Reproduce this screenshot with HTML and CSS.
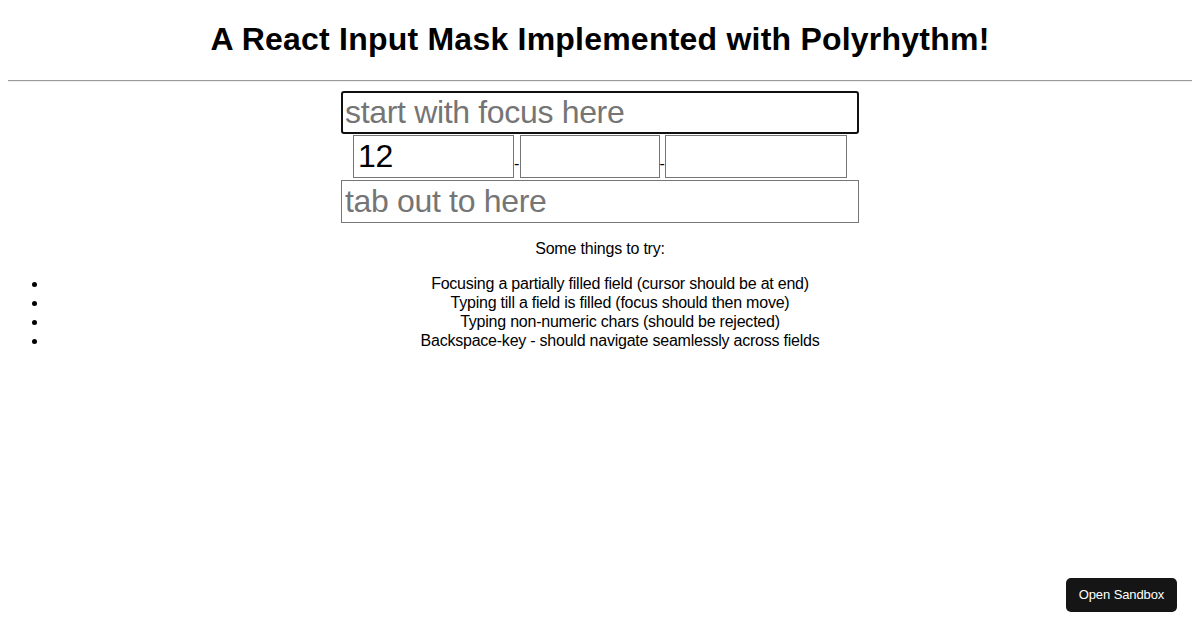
FILE: index.html
```html
<!DOCTYPE html>
<html>
<head>
<meta charset="utf-8">
<title>A React Input Mask Implemented with Polyrhythm!</title>
<link rel="stylesheet" href="styles.css">
</head>
<body>
<div class="app">
  <h1 class="title">A React Input Mask Implemented with Polyrhythm!</h1>
  <hr class="rule">
  <div class="fields">
    <div class="line first"><input class="field wide focused" type="text" placeholder="start with focus here"></div>
    <div class="line"><input class="field part p1" type="text" value="12"><span class="dash">-</span><input class="field part p2" type="text"><span class="dash">-</span><input class="field part p3" type="text"></div>
    <div class="line"><input class="field wide" type="text" placeholder="tab out to here"></div>
  </div>
  <p class="intro">Some things to try:</p>
  <ul class="tips">
    <li>Focusing a partially filled field (cursor should be at end)</li>
    <li>Typing till a field is filled (focus should then move)</li>
    <li>Typing non-numeric chars (should be rejected)</li>
    <li>Backspace-key - should navigate seamlessly across fields</li>
  </ul>
</div>
<a class="sandbox-btn" href="#">Open Sandbox</a>
</body>
</html>
```

FILE: styles.css
```css
html, body {
  background: #ffffff;
}
body {
  margin: 0 8px 8px;
  font-family: "Liberation Sans", Arial, sans-serif;
  font-size: 16px;
  color: #000;
}
.app {
  text-align: center;
  padding-top: 0.1px;
}
.title {
  font-size: 32px;
  font-weight: bold;
  margin: 21.3px 0 21.44px;
  line-height: 37px;
  letter-spacing: 0.22px;
}
.rule {
  margin: 8px 0;
  border: 0;
  border-top: 1px solid #9a9a9a;
  border-bottom: 1px solid #eeeeee;
  height: 0;
}
.fields {
  display: flex;
  flex-direction: column;
  align-items: center;
}
.line {
  height: 44.5px;
  display: flex;
  align-items: flex-start;
  justify-content: center;
}
.line.first {
  height: 44.5px;
  padding-top: 1px;
}
.field {
  box-sizing: border-box;
  height: 43px;
  margin: 0;
  font-family: "Liberation Sans", Arial, sans-serif;
  font-size: 32px;
  line-height: 37px;
  letter-spacing: -0.33px;
  color: #000;
  background: #fff;
  border: 1px solid #767676;
  padding: 2px 3px;
  outline: none;
  border-radius: 0;
}
.field::placeholder {
  color: #757575;
}
.wide {
  width: 518px;
}
.focused {
  border: 2px solid #101010;
  padding: 1px 2px;
  border-radius: 3px;
}
.p1 { width: 161px; padding-left: 4px; }
.p2 { width: 140px; }
.p3 { width: 182px; }
.dash {
  font-size: 16px;
  width: 5.5px;
  text-align: center;
  padding-top: 20px;
  line-height: 18px;
}
.intro {
  margin: 15.5px 0 16px;
  line-height: 18px;
  letter-spacing: -0.2px;
}
.tips {
  margin: 16px 0;
  padding-left: 40px;
  line-height: 19px;
  letter-spacing: -0.23px;
}
.tips li {
  text-align: center;
}
.sandbox-btn {
  position: fixed;
  right: 23px;
  bottom: 18px;
  width: 111px;
  height: 34px;
  box-sizing: border-box;
  padding-bottom: 2px;
  display: flex;
  align-items: center;
  justify-content: center;
  background: #151515;
  color: #ffffff;
  font-family: "Liberation Sans", Arial, sans-serif;
  font-size: 13px;
  letter-spacing: -0.1px;
  text-decoration: none;
  border-radius: 5px;
}
```
